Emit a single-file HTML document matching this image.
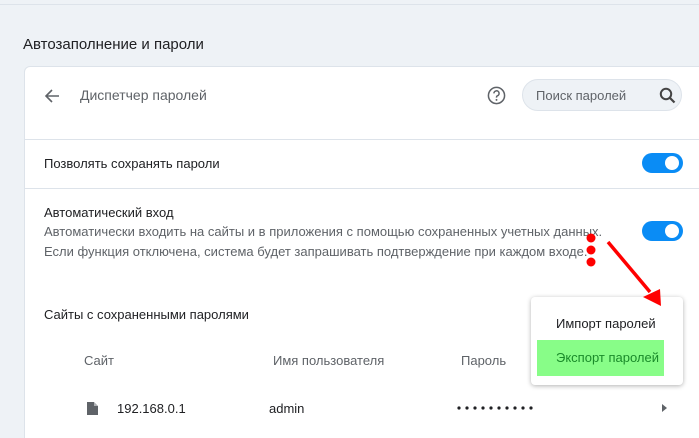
<!DOCTYPE html>
<html><head><meta charset="utf-8"><style>
*{margin:0;padding:0;box-sizing:border-box}
html,body{width:699px;height:438px;overflow:hidden}
body{background:#eef2f6;font-family:"Liberation Sans",sans-serif;position:relative;color:#202124}
.a{position:absolute;white-space:nowrap}
.card{position:absolute;left:24px;top:66px;width:690px;height:372px;background:#fff;border:1px solid #dde3ea;border-bottom:none;border-radius:6px 6px 0 0}
.hr{position:absolute;left:24px;width:675px;height:1px;background:#dde3ea}
.tog{position:absolute;width:41px;height:20px;border-radius:10px;background:#0a8cf5}
.tog::after{content:"";position:absolute;right:4px;top:3px;width:14px;height:14px;border-radius:50%;background:#fff}
.g{color:#5f6368}
</style></head><body>
<div style="position:absolute;left:0;top:4px;width:699px;height:1px;background:#dde3ea"></div>
<div class="a" style="left:23px;top:36px;font-size:15px">Автозаполнение и пароли</div>
<div class="card"></div>
<svg class="a" style="left:44px;top:88px" width="16" height="16" viewBox="0 0 16 16"><path d="M15 8H2M8 2L2 8l6 6" stroke="#5f6368" stroke-width="1.6" fill="none"/></svg>
<div class="a g" style="left:80px;top:87px;font-size:14px">Диспетчер паролей</div>
<svg class="a" style="left:487px;top:86px" width="19" height="19" viewBox="0 0 20 20"><circle cx="10" cy="10" r="8.5" stroke="#5f6368" stroke-width="1.6" fill="none"/><path d="M7.3 7.8a2.7 2.7 0 1 1 3.6 2.5c-.7.3-.9.7-.9 1.5v.4" stroke="#5f6368" stroke-width="1.6" fill="none"/><circle cx="10" cy="14.6" r="1" fill="#5f6368"/></svg>
<div class="a" style="left:522px;top:79px;width:160px;height:32px;border-radius:16px;background:#eef2f6;border:1px solid #dde3ea"></div>
<div class="a g" style="left:536px;top:88px;font-size:13px">Поиск паролей</div>
<svg class="a" style="left:659px;top:87px" width="17" height="17" viewBox="0 0 17 17"><circle cx="7" cy="7" r="5.2" stroke="#444" stroke-width="2" fill="none"/><path d="M11 11l4.5 4.5" stroke="#444" stroke-width="2.2"/></svg>
<div class="hr" style="top:139px"></div>
<div class="a" style="left:44px;top:156px;font-size:13px">Позволять сохранять пароли</div>
<div class="tog" style="left:642px;top:153px"></div>
<div class="hr" style="top:188px"></div>
<div class="a" style="left:44px;top:205px;font-size:13px">Автоматический вход</div>
<div class="a g" style="left:44px;top:224px;font-size:13px">Автоматически входить на сайты и в приложения с помощью сохраненных учетных данных.</div>
<div class="a g" style="left:44px;top:244px;font-size:13px">Если функция отключена, система будет запрашивать подтверждение при каждом входе.</div>
<div class="tog" style="left:642px;top:221px"></div>
<div class="a" style="left:44px;top:307px;font-size:13px">Сайты с сохраненными паролями</div>
<div class="a g" style="left:84px;top:353px;font-size:13px">Сайт</div>
<div class="a g" style="left:273px;top:353px;font-size:13px">Имя пользователя</div>
<div class="a g" style="left:461px;top:353px;font-size:13px">Пароль</div>
<svg class="a" style="left:87px;top:402px" width="11" height="13" viewBox="0 0 11 13"><path d="M0 0h7l4 4v9H0z" fill="#5f6368"/><path d="M7 0v4h4" fill="#fff" opacity=".5"/></svg>
<div class="a" style="left:117px;top:401px;font-size:13px">192.168.0.1</div>
<div class="a" style="left:269px;top:401px;font-size:13px">admin</div>
<svg class="a" style="left:457px;top:405px" width="80" height="6">
<g fill="#202124"><circle cx="2" cy="3" r="1.6"/><circle cx="10" cy="3" r="1.6"/><circle cx="18" cy="3" r="1.6"/><circle cx="26" cy="3" r="1.6"/><circle cx="34" cy="3" r="1.6"/><circle cx="42" cy="3" r="1.6"/><circle cx="50" cy="3" r="1.6"/><circle cx="58" cy="3" r="1.6"/><circle cx="66" cy="3" r="1.6"/><circle cx="74" cy="3" r="1.6"/></g></svg>
<svg class="a" style="left:662px;top:404px" width="5" height="8"><path d="M0 0l5 4-5 4z" fill="#5f6368"/></svg>
<div class="a" style="left:531px;top:297px;width:152px;height:88px;background:#fff;border-radius:4px;box-shadow:0 1px 5px rgba(0,0,0,.3)"></div>
<div class="a" style="left:556px;top:316px;font-size:13px">Импорт паролей</div>
<div class="a" style="left:537px;top:340px;width:127px;height:36px;background:#88fd88"></div>
<div class="a" style="left:556px;top:350px;font-size:13px;color:#1a8a2a">Экспорт паролей</div>
<svg class="a" style="left:0;top:0" width="699" height="438">
<circle cx="591" cy="238" r="4.5" fill="#f00"/><circle cx="591" cy="250" r="4.5" fill="#f00"/><circle cx="591" cy="262" r="4.5" fill="#f00"/>
<path d="M608 242L650 292" stroke="#f00" stroke-width="3.5"/>
<path d="M661 306L643 297L660 289z" fill="#f00"/>
</svg>
</body></html>
